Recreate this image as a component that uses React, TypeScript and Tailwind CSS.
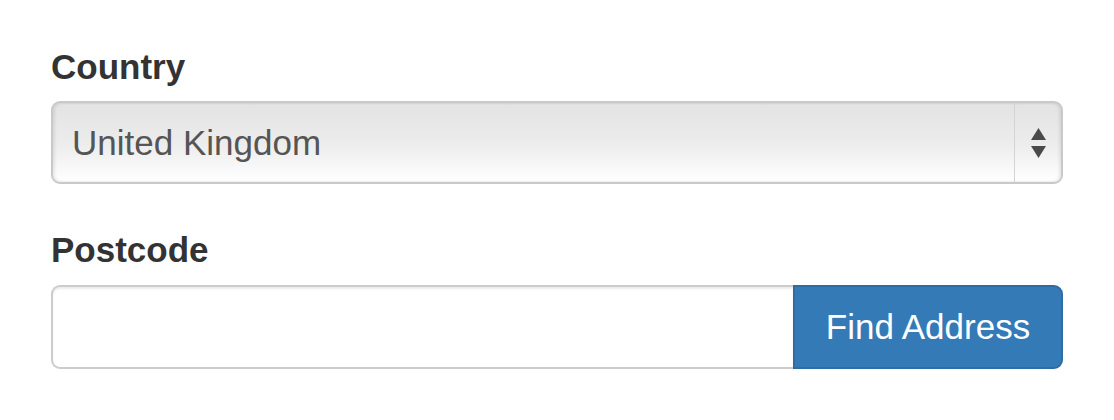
export default function App() {
  const font = { fontFamily: "'Liberation Sans', Arial, sans-serif" };

  return (
    <div className="w-[1114px] h-[420px] bg-white pl-[51px] pt-[47px]" style={font}>
      <div className="w-[1012px]">
        {/* Country */}
        <label className="block text-[35px] leading-[40px] font-bold text-[#333] mb-[14px]">Country</label>
        <div className="relative flex items-center h-[83px] rounded-[9px] border-2 border-[#c9c9c9] bg-gradient-to-b from-[#e3e3e3] via-[#ececec] to-white shadow-[inset_2px_0_3px_rgba(0,0,0,0.08),inset_-2px_0_3px_rgba(0,0,0,0.08)]">
          <span className="flex-1 pl-[19px] text-[35px] leading-[40px] text-[#555]">United Kingdom</span>
          <div className="flex h-full w-[47px] flex-col items-center justify-center gap-[6px] border-l border-[#d4d4d4]">
            <svg width="15" height="12" viewBox="0 0 15 12">
              <polygon points="7.5,0 15,12 0,12" fill="#4a4a4a" />
            </svg>
            <svg width="15" height="12" viewBox="0 0 15 12">
              <polygon points="0,0 15,0 7.5,12" fill="#4a4a4a" />
            </svg>
          </div>
        </div>

        {/* Postcode */}
        <label className="block mt-[46px] text-[35px] leading-[40px] font-bold text-[#333] mb-[15px]">Postcode</label>
        <div className="flex h-[84px]">
          <input
            type="text"
            className="flex-1 min-w-0 rounded-l-[9px] border-2 border-r-0 border-[#cccccc] bg-white shadow-[inset_0_2px_2px_rgba(0,0,0,0.075)] outline-none"
            style={font}
          />
          <button
            className="w-[270px] rounded-r-[9px] border-2 border-[#2e6da4] bg-[#337ab7] text-[35px] leading-[40px] text-white"
            style={font}
          >
            Find Address
          </button>
        </div>
      </div>
    </div>
  );
}
